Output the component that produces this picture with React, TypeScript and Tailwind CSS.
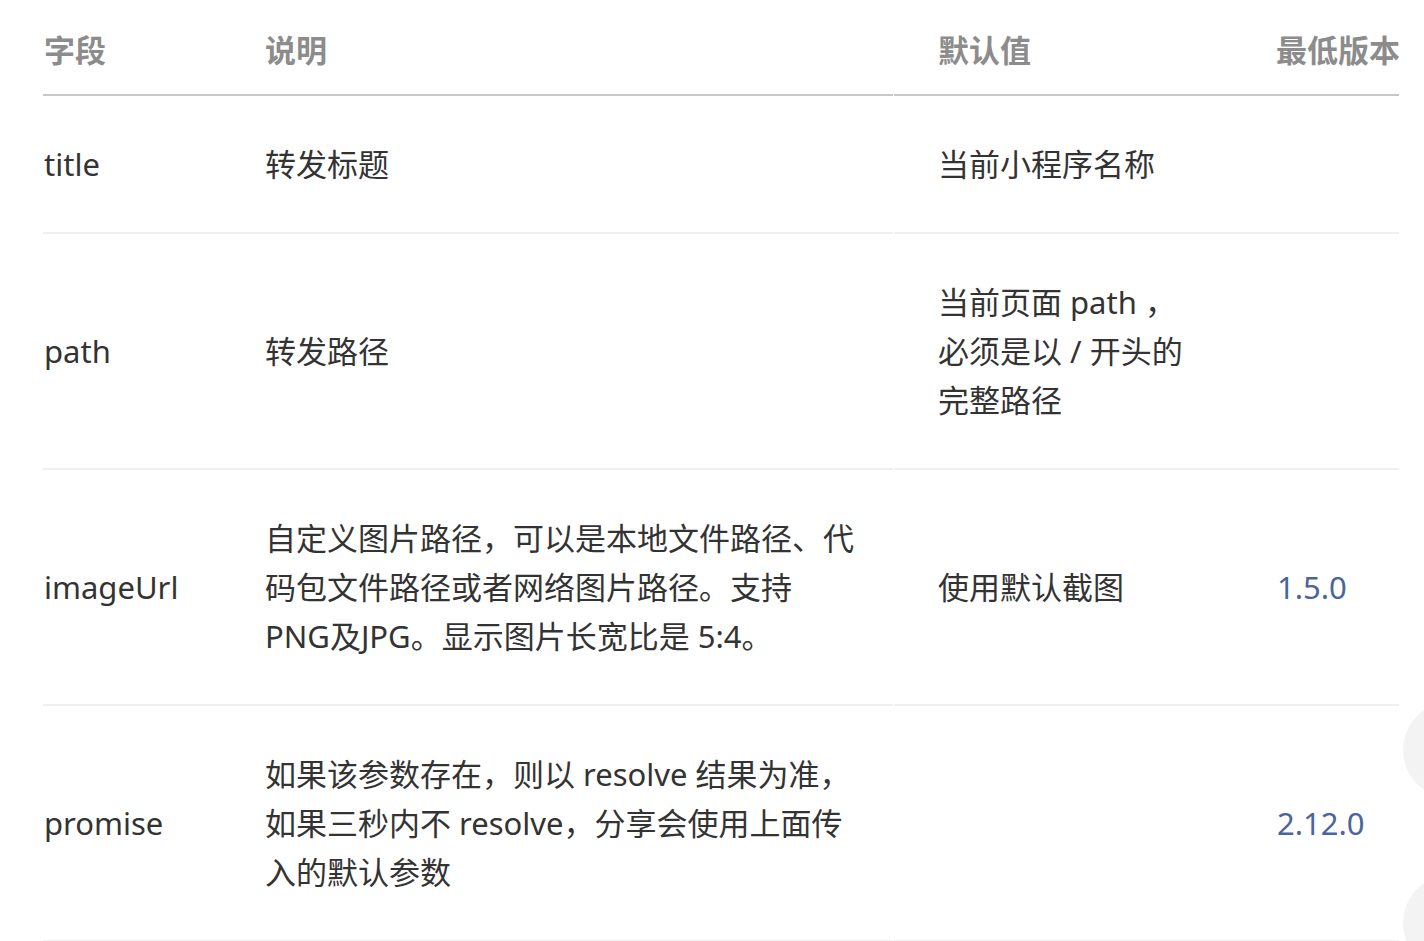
import React from "react"

type Row = {
    field: string
    desc: React.ReactNode
    def: React.ReactNode
    version?: string
}

const rows: Row[] = [
    { field: "title", desc: "转发标题", def: "当前小程序名称" },
    {
        field: "path",
        desc: "转发路径",
        def: (
            <>
                当前页面 path ，<br />必须是以 / 开头的<br />完整路径
            </>
        ),
    },
    {
        field: "imageUrl",
        desc: (
            <>
                自定义图片路径，可以是本地文件路径、代<br />码包文件路径或者网络图片路径。支持<br />PNG及JPG。显示图片长宽比是 5:4。
            </>
        ),
        def: "使用默认截图",
        version: "1.5.0",
    },
    {
        field: "promise",
        desc: (
            <>
                如果该参数存在，则以 resolve 结果为准，<br />如果三秒内不 resolve，分享会使用上面传<br />入的默认参数
            </>
        ),
        def: "",
        version: "2.12.0",
    },
]

export default function App() {
    return (
        <div
            className="relative w-[1424px] h-[941px] overflow-hidden bg-white"
            style={{ fontFamily: '"Noto Sans", "Noto Sans CJK SC", sans-serif' }}
        >
            <div className="pl-[43px] w-[1399px] text-[31px] leading-[49px]">
                {/* header */}
                <div className="grid grid-cols-[850px_1px_382px_123px] font-bold text-[#8c8c8c]">
                    <div className="flex pt-[26px] pb-[19px] border-b-2 border-[#c8c8c8]">
                        <div className="w-[222px] pl-px">字段</div>
                        <div>说明</div>
                    </div>
                    <div />
                    <div className="pl-[44px] pt-[26px] pb-[19px] border-b-2 border-[#c8c8c8]">默认值</div>
                    <div className="text-right whitespace-nowrap pt-[26px] pb-[19px] border-b-2 border-[#c8c8c8]">最低版本</div>
                </div>

                {/* body */}
                {rows.map((r) => (
                    <div key={r.field} className="grid grid-cols-[850px_1px_382px_123px] text-[#333]">
                        <div className="flex items-center pt-[44px] pb-[43px] border-b-2 border-[#f0f0f0]">
                            <div className="w-[222px] pl-px">{r.field}</div>
                            <div className="whitespace-nowrap">{r.desc}</div>
                        </div>
                        <div />
                        <div className="flex items-center pl-[44px] pt-[44px] pb-[43px] border-b-2 border-[#f0f0f0]">
                            <div className="whitespace-nowrap">{r.def}</div>
                        </div>
                        <div className="flex items-center pl-px pt-[44px] pb-[43px] border-b-2 border-[#f0f0f0] text-[#4a659e]">
                            {r.version}
                        </div>
                    </div>
                ))}
            </div>

            {/* floating buttons at right edge */}
            <div className="absolute left-[1403px] top-[702px] w-[96px] h-[96px] rounded-full bg-[#f3f3f3]" />
            <div className="absolute left-[1403px] top-[875px] w-[96px] h-[96px] rounded-full bg-[#f3f3f3]" />
        </div>
    )
}
